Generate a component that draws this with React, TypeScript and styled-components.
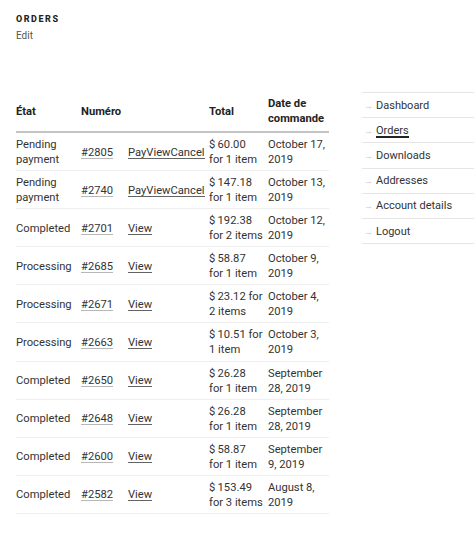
import React from "react";
import styled, { createGlobalStyle } from "styled-components";

const GlobalStyle = createGlobalStyle`
  html, body {
    margin: 0;
    padding: 0;
    background: #fff;
  }
  body {
    font-family: Roboto, "Noto Sans", "Liberation Sans", sans-serif;
    color: #333;
  }
`;

interface Order {
  status: string[];
  number: string;
  actions: string;
  total: string[];
  date: string[];
}

const orders: Order[] = [
  { status: ["Pending", "payment"], number: "#2805", actions: "PayViewCancel", total: ["$\u200960.00", "for 1 item"], date: ["October 17,", "2019"] },
  { status: ["Pending", "payment"], number: "#2740", actions: "PayViewCancel", total: ["$\u2009147.18", "for 1 item"], date: ["October 13,", "2019"] },
  { status: ["Completed"], number: "#2701", actions: "View", total: ["$\u2009192.38", "for 2 items"], date: ["October 12,", "2019"] },
  { status: ["Processing"], number: "#2685", actions: "View", total: ["$\u200958.87", "for 1 item"], date: ["October 9,", "2019"] },
  { status: ["Processing"], number: "#2671", actions: "View", total: ["$\u200923.12 for", "2 items"], date: ["October 4,", "2019"] },
  { status: ["Processing"], number: "#2663", actions: "View", total: ["$\u200910.51 for", "1 item"], date: ["October 3,", "2019"] },
  { status: ["Completed"], number: "#2650", actions: "View", total: ["$\u200926.28", "for 1 item"], date: ["September", "28, 2019"] },
  { status: ["Completed"], number: "#2648", actions: "View", total: ["$\u200926.28", "for 1 item"], date: ["September", "28, 2019"] },
  { status: ["Completed"], number: "#2600", actions: "View", total: ["$\u200958.87", "for 1 item"], date: ["September", "9, 2019"] },
  { status: ["Completed"], number: "#2582", actions: "View", total: ["$\u2009153.49", "for 3 items"], date: ["August 8,", "2019"] },
];

const navItems = ["Dashboard", "Orders", "Downloads", "Addresses", "Account details", "Logout"];

function Lines({ lines }: { lines: string[] }) {
  return (
    <>
      {lines.map((l) => (
        <Line key={l}>{l}</Line>
      ))}
    </>
  );
}

function App() {
  return (
    <>
      <GlobalStyle />
      <Page>
        <PageHeader>
          <Title>Orders</Title>
          <EditLink>Edit</EditLink>
        </PageHeader>
        <Content>
          <OrdersTable>
            <colgroup>
              <col style={{ width: 65 }} />
              <col style={{ width: 47 }} />
              <col style={{ width: 81 }} />
              <col style={{ width: 59 }} />
              <col style={{ width: 61 }} />
            </colgroup>
            <thead>
              <tr>
                <Th>État</Th>
                <Th>Numéro</Th>
                <Th></Th>
                <Th>Total</Th>
                <Th>
                  <Lines lines={["Date de", "commande"]} />
                </Th>
              </tr>
            </thead>
            <tbody>
              {orders.map((o) => (
                <tr key={o.number}>
                  <Td><Lines lines={o.status} /></Td>
                  <Td><NumberLink>{o.number}</NumberLink></Td>
                  <Td><ActionLink>{o.actions}</ActionLink></Td>
                  <Td><Lines lines={o.total} /></Td>
                  <Td><Lines lines={o.date} /></Td>
                </tr>
              ))}
            </tbody>
          </OrdersTable>
          <Nav>
            {navItems.map((item) => (
              <NavItem key={item}>
                <Arrow>→</Arrow>
                <NavLink $active={item === "Orders"}>{item}</NavLink>
              </NavItem>
            ))}
          </Nav>
        </Content>
      </Page>
    </>
  );
}

const Page = styled.div`
  padding: 13px 0 30px 16px;
  width: 474px;
  box-sizing: border-box;
  overflow: hidden;
`;

const PageHeader = styled.header`
  display: flex;
  flex-direction: column;
  gap: 3px;
`;

const Title = styled.h1`
  margin: 0;
  font-size: 9px;
  font-weight: 800;
  letter-spacing: 0.17em;
  text-transform: uppercase;
  color: #222;
  line-height: 13px;
`;

const EditLink = styled.a`
  font-size: 10px;
  color: #555;
  line-height: 13px;
`;

const Content = styled.div`
  display: flex;
  align-items: flex-start;
  gap: 33px;
  margin-top: 50px;
`;

const OrdersTable = styled.table`
  border-collapse: collapse;
  table-layout: fixed;
  width: 313px;
  flex: none;
  margin-top: 4px;
  font-size: 11.2px;
  line-height: 15px;
`;

const Line = styled.span`
  display: block;
  white-space: nowrap;
`;

const Th = styled.th`
  text-align: left;
  font-weight: 700;
  color: #222;
  padding: 0 4px 5px 0;
  border-bottom: 2px solid #c4c4c4;
  vertical-align: middle;
  height: 30px;
`;

const Td = styled.td`
  padding: 4px 4px 3.1px 0;
  border-bottom: 1px solid #eee;
  height: 30px;
  vertical-align: middle;
  color: #333;
`;

const NumberLink = styled.a`
  color: #333;
  text-decoration: none;
  box-shadow: inset 0 -1px 0 rgba(15, 15, 15, 0.3);
`;

const ActionLink = styled.a`
  color: #333;
  text-decoration: none;
  box-shadow: inset 0 -1px 0 rgba(15, 15, 15, 0.65);
`;

const Nav = styled.ul`
  list-style: none;
  margin: 0;
  padding: 0;
  width: 112px;
  flex: none;
  border-top: 1px solid #e6e6e6;
  font-size: 11px;
`;

const NavItem = styled.li`
  display: flex;
  align-items: center;
  gap: 3px;
  height: 23.2px;
  padding-top: 1px;
  box-sizing: content-box;
  border-bottom: 1px solid #e6e6e6;
  padding-left: 2px;
`;

const Arrow = styled.span`
  color: #c8c8c8;
  font-size: 9px;
  width: 9px;
`;

const NavLink = styled.a<{ $active?: boolean }>`
  color: #333;
  text-decoration: none;
  line-height: 13px;
  padding-bottom: 1px;
  box-shadow: ${({ $active }) => ($active ? "inset 0 -2px 0 #222" : "none")};
`;

export default App;
